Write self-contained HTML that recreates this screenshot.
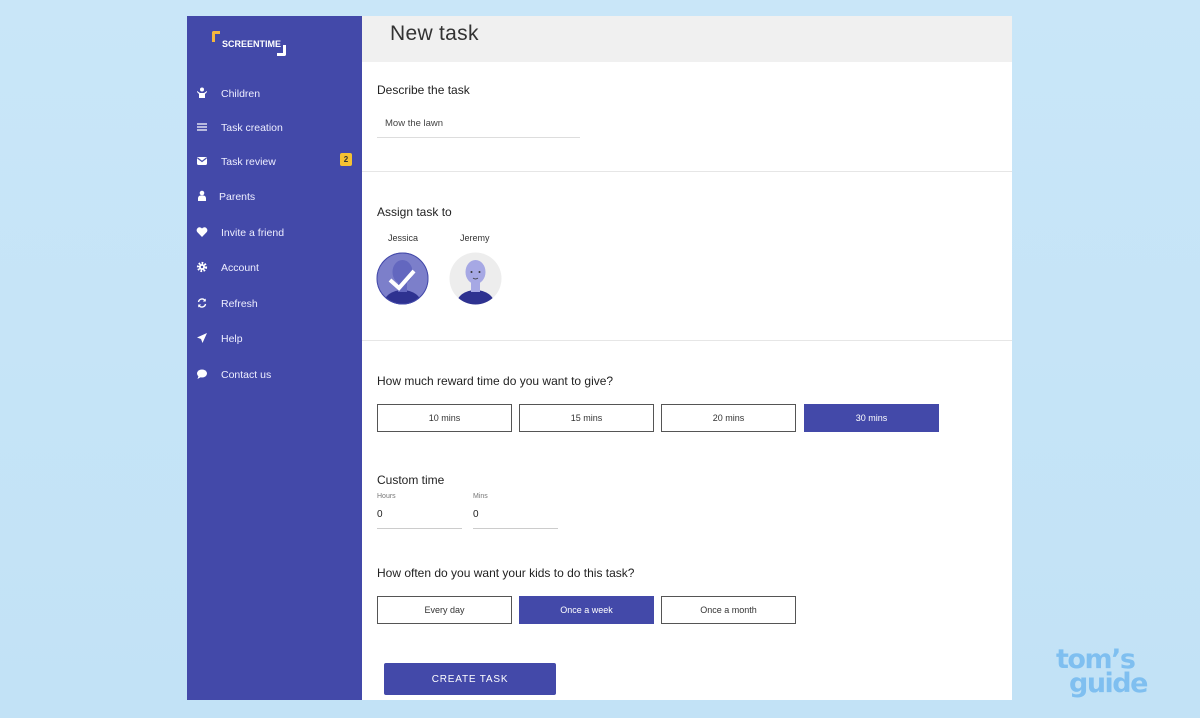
<!DOCTYPE html>
<html><head><style>
*{margin:0;padding:0;box-sizing:border-box}
body{width:1200px;height:718px;background:linear-gradient(180deg,#c9e6f8,#c2e2f6);font-family:"Liberation Sans",sans-serif;position:relative;overflow:hidden}
.a{position:absolute}
#side{left:187px;top:16px;width:175px;height:684px;background:#4349a9}
#main{left:362px;top:16px;width:650px;height:684px;background:#fff}
#hdr{left:362px;top:16px;width:650px;height:46px;background:#f0f0f0}
.nav{position:absolute;left:0;color:#eef;font-size:10.5px}
.nav .ic{position:absolute;left:9px;top:-1px;width:12px;height:12px}
.nav span{position:absolute;left:34px;white-space:nowrap}
.t{position:absolute;color:#222;font-size:12px}
.btn{position:absolute;height:28px;border:1px solid #555;font-size:9px;color:#333;text-align:center;line-height:27px;background:#fff}
.on{background:#4349a9;color:#fff;border-color:#4349a9}
.line{position:absolute;height:1px;background:#e6e6e6}
.sm{position:absolute;font-size:7px;color:#777}
</style></head><body>
<div class="a" id="side"></div>
<div class="a" id="main"></div>
<div class="a" id="hdr"></div>
<div class="a" style="left:390px;top:22px;font-size:21px;color:#333;letter-spacing:.3px">New task</div>
<div class="a" style="left:212px;top:31px;width:8px;height:11px;border-left:3px solid #f4b63f;border-top:3px solid #f4b63f;border-radius:2px 0 0 0"></div>
<div class="a" style="left:222px;top:39px;color:#fff;font-size:9px;font-weight:bold">SCREENTIME</div>
<div class="a" style="left:277px;top:45px;width:9px;height:11px;border-right:3px solid #fff;border-bottom:3px solid #fff;border-radius:0 0 2px 0"></div>
<div class="nav" style="top:88px;left:187px"><svg class="ic" viewBox="0 0 12 12"><circle cx="6" cy="2.5" r="2" fill="#fff"/><path d="M1 4l3 2h4l3-2v1l-2 2v4H3V7L1 5z" fill="#fff"/></svg><span>Children</span></div>
<div class="nav" style="top:122px;left:187px"><svg class="ic" viewBox="0 0 12 12"><path d="M1 3h10M1 6h10M1 9h10" stroke="#fff" stroke-width="1.3"/></svg><span>Task creation</span></div>
<div class="nav" style="top:156px;left:187px"><svg class="ic" viewBox="0 0 12 12"><rect x="1" y="2" width="10" height="8" rx="1.5" fill="#fff"/><path d="M1.5 3l4.5 3.5 4.5-3.5" stroke="#4349a9" fill="none" stroke-width="1.2"/></svg><span>Task review</span></div>
<div class="a" style="left:340px;top:153px;width:12px;height:13px;background:#f5c232;border-radius:2px;font-size:8px;text-align:center;line-height:13px;color:#333;font-weight:bold">2</div>
<div class="nav" style="top:191px;left:187px"><svg class="ic" viewBox="0 0 12 12"><circle cx="6" cy="3" r="2.3" fill="#fff"/><path d="M2 11v-3a3 3 0 0 1 3-2.5h2A3 3 0 0 1 10 8v3z" fill="#fff"/></svg><span style="left:32px">Parents</span></div>
<div class="nav" style="top:227px;left:187px"><svg class="ic" viewBox="0 0 12 12"><path d="M6 11L1.2 6A2.8 2.8 0 0 1 6 2.5 2.8 2.8 0 0 1 10.8 6z" fill="#fff"/></svg><span>Invite a friend</span></div>
<div class="nav" style="top:262px;left:187px"><svg class="ic" viewBox="0 0 12 12"><circle cx="6" cy="6" r="3.8" fill="none" stroke="#fff" stroke-width="2.6" stroke-dasharray="1.6 1.3"/><circle cx="6" cy="6" r="3" fill="#fff"/><circle cx="6" cy="6" r="1.2" fill="#4349a9"/></svg><span>Account</span></div>
<div class="nav" style="top:298px;left:187px"><svg class="ic" viewBox="0 0 12 12"><path d="M2.5 5a3.6 3.6 0 0 1 6.5-1.5M9.5 7a3.6 3.6 0 0 1-6.5 1.5" stroke="#fff" stroke-width="1.4" fill="none"/><path d="M9.8 1.5v3h-3zM2.2 10.5v-3h3z" fill="#fff"/></svg><span>Refresh</span></div>
<div class="nav" style="top:333px;left:187px"><svg class="ic" viewBox="0 0 12 12"><path d="M11 1L1 5.5l4 1.5 1.5 4z" fill="#fff"/></svg><span>Help</span></div>
<div class="nav" style="top:369px;left:187px"><svg class="ic" viewBox="0 0 12 12"><ellipse cx="6" cy="5.5" rx="5" ry="4" fill="#fff"/><path d="M2.5 8L1.5 11l3.5-2z" fill="#fff"/></svg><span>Contact us</span></div>

<div class="t" style="left:377px;top:83px">Describe the task</div>
<div class="a" style="left:385px;top:118px;font-size:9.5px;color:#444">Mow the lawn</div>
<div class="line" style="left:377px;top:137px;width:203px;background:#ddd"></div>
<div class="line" style="left:362px;top:171px;width:650px"></div>
<div class="t" style="left:377px;top:205px">Assign task to</div>
<div class="a" style="left:388px;top:233px;font-size:9px;color:#333">Jessica</div>
<div class="a" style="left:460px;top:233px;font-size:9px;color:#333">Jeremy</div>
<svg class="a" style="left:376px;top:252px" width="53" height="53" viewBox="0 0 53 53"><defs><clipPath id="c1"><circle cx="26.5" cy="26.5" r="26"/></clipPath></defs><circle cx="26.5" cy="26.5" r="26" fill="#7c7fca"/><g clip-path="url(#c1)"><ellipse cx="26.5" cy="52" rx="19" ry="14" fill="#2e3290"/><rect x="22" y="30" width="9" height="10" fill="#6367bf"/><ellipse cx="26.5" cy="20" rx="10" ry="12" fill="#6367bf"/></g><circle cx="26.5" cy="26.5" r="25.5" fill="none" stroke="#4349a9" stroke-width="1"/><path d="M14 28l9 8 15-17" stroke="#fff" stroke-width="4" fill="none"/></svg>
<svg class="a" style="left:449px;top:252px" width="53" height="53" viewBox="0 0 53 53"><defs><clipPath id="c2"><circle cx="26.5" cy="26.5" r="26"/></clipPath></defs><circle cx="26.5" cy="26.5" r="26" fill="#ededed"/><g clip-path="url(#c2)"><ellipse cx="26.5" cy="52" rx="19" ry="14" fill="#2e3290"/><rect x="22" y="30" width="9" height="10" fill="#a6a8e4"/><ellipse cx="26.5" cy="20" rx="10" ry="12" fill="#a6a8e4"/></g><circle cx="22.5" cy="20" r="1" fill="#333"/><circle cx="30.5" cy="20" r="1" fill="#333"/><path d="M24 26q2.5 2 5 0" stroke="#333" fill="none" stroke-width=".8"/></svg>
<div class="line" style="left:362px;top:340px;width:650px"></div>
<div class="t" style="left:377px;top:374px">How much reward time do you want to give?</div>
<div class="btn" style="left:377px;top:404px;width:135px">10 mins</div>
<div class="btn" style="left:519px;top:404px;width:135px">15 mins</div>
<div class="btn" style="left:661px;top:404px;width:135px">20 mins</div>
<div class="btn on" style="left:804px;top:404px;width:135px">30 mins</div>
<div class="t" style="left:377px;top:473px">Custom time</div>
<div class="sm" style="left:377px;top:493px">Hours</div>
<div class="sm" style="left:473px;top:493px">Mins</div>
<div class="a" style="left:377px;top:509px;font-size:10px;color:#222">0</div>
<div class="a" style="left:473px;top:509px;font-size:10px;color:#222">0</div>
<div class="line" style="left:377px;top:528px;width:85px;background:#ccc"></div>
<div class="line" style="left:473px;top:528px;width:85px;background:#ccc"></div>
<div class="t" style="left:377px;top:566px">How often do you want your kids to do this task?</div>
<div class="btn" style="left:377px;top:596px;width:135px">Every day</div>
<div class="btn on" style="left:519px;top:596px;width:135px">Once a week</div>
<div class="btn" style="left:661px;top:596px;width:135px">Once a month</div>
<div class="btn on" style="left:384px;top:663px;width:172px;height:32px;line-height:32px;font-size:10px;letter-spacing:.8px;border-radius:2px">CREATE TASK</div>
<div class="a" style="left:1056px;top:648px;font-family:'DejaVu Sans',sans-serif;font-weight:bold;font-size:27px;line-height:24px;color:#7fbff0;letter-spacing:-1.5px">tom’s<br><span style="padding-left:13px">guide</span></div>
</body></html>
